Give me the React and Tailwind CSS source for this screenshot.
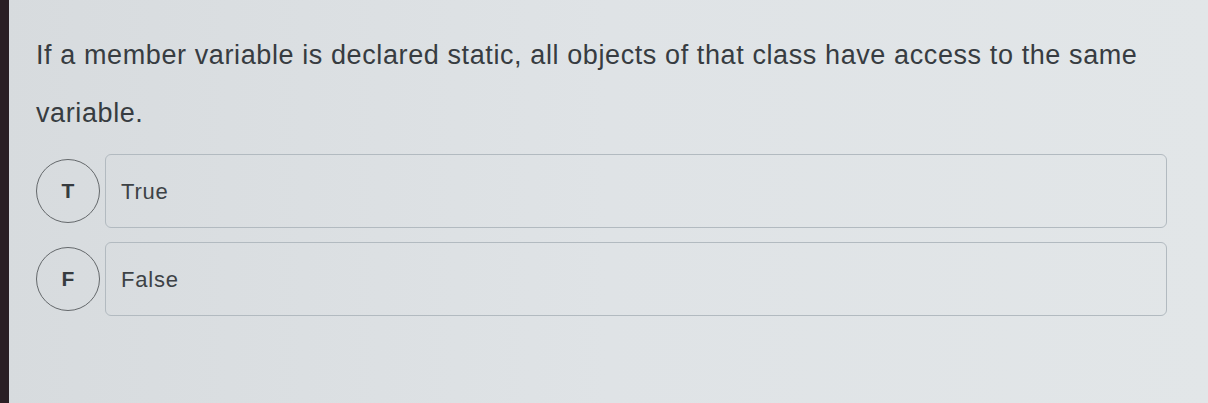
export default function App() {
  const options = [
    { key: 'T', label: 'True' },
    { key: 'F', label: 'False' },
  ]

  return (
    <div className="flex h-[403px] w-[1208px] overflow-hidden bg-gradient-to-r from-[#d7dbde] via-[#dfe3e6] to-[#e2e6e8] font-['Liberation_Sans',Arial,sans-serif]">
      <div className="w-[9px] shrink-0 bg-[#2a1f24]" />
      <div className="flex-1 pl-[27px] pr-[41px] pt-[26px]">
        <p className="text-[27px] leading-[58px] tracking-[0.6px] text-[#373c41]">
          If a member variable is declared static, all objects of that class have access to the same variable.
        </p>

        <div className="mt-[12px] flex flex-col gap-[14px]">
          {options.map(opt => (
            <div key={opt.key} className="flex items-center gap-[5px]">
              <div className="flex h-[64px] w-[64px] shrink-0 items-center justify-center rounded-full border-[1.5px] border-[#64686b] text-[21px] font-bold text-[#363b3f]">
                {opt.key}
              </div>
              <div className="flex h-[74px] flex-1 items-center rounded-[6px] border border-[#b2bac0] pl-[15px] text-[22px] tracking-[0.8px] text-[#3d4246]">
                {opt.label}
              </div>
            </div>
          ))}
        </div>
      </div>
    </div>
  )
}
